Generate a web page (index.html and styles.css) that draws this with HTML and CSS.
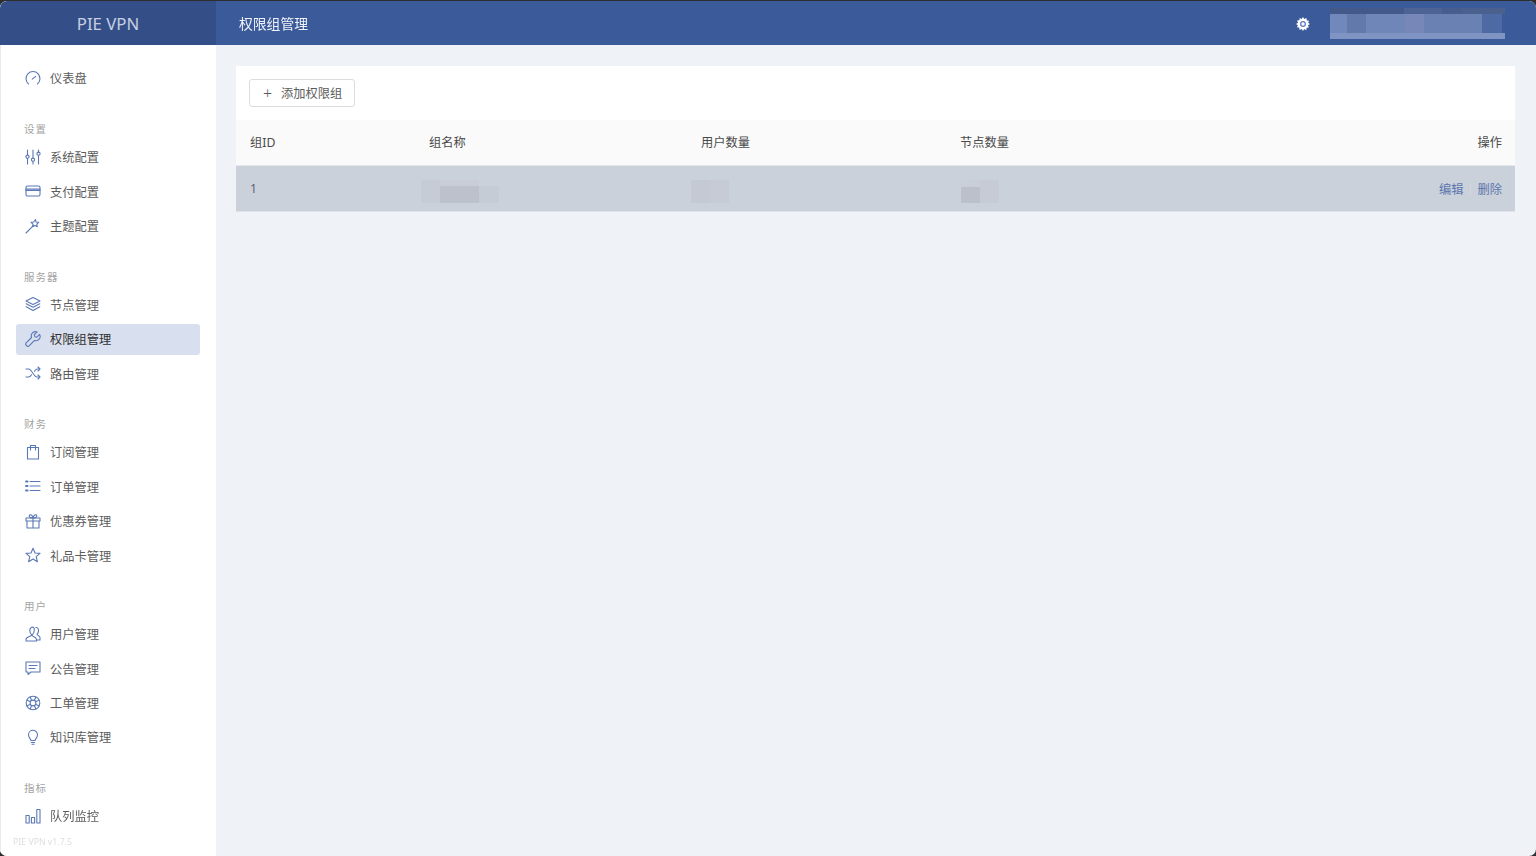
FILE: index.html
```html
<!DOCTYPE html>
<html lang="zh-CN">
<head>
<meta charset="utf-8">
<title>权限组管理 - PIE VPN</title>
<link rel="stylesheet" href="styles.css">
</head>
<body>
<div class="app">
  <aside class="sidebar">
    <div class="brand">PIE VPN</div>
    <nav class="nav">
      <a class="item"><svg class="ico" viewBox="0 0 16 16"><path d="M3.600 14a7 7 0 1 1 8.800 0"/><path d="M7.200 9.200 10.600 6.400"/></svg>仪表盘</a>
      <div class="title">设置</div>
      <a class="item"><svg class="ico" viewBox="0 0 16 16"><path d="M2.500 1v5M2.500 9.500V15M8 1v8M8 12.500V15M13.500 1v2M13.500 6.500V15"/><circle cx="2.500" cy="7.700" r="1.600"/><circle cx="8" cy="10.700" r="1.600"/><circle cx="13.500" cy="4.700" r="1.600"/></svg>系统配置</a>
      <a class="item"><svg class="ico" viewBox="0 0 16 16"><rect x="1" y="3" width="14" height="10" rx="1.400"/><path d="M1 6h14M1 7.400h14"/></svg>支付配置</a>
      <a class="item"><svg class="ico" viewBox="0 0 16 16"><path d="M1 15 8.600 7.400"/><path d="M10.500 1.500 11 4l2.700.4-1.900 1.800.5 2.600-2.400-1.200-2.300 1.200.4-2.600L6 4.400 8.700 4z"/></svg>主题配置</a>
      <div class="title">服务器</div>
      <a class="item"><svg class="ico" viewBox="0 0 16 16"><path d="M8 1.500 15 5 8 8.500 1 5z"/><path d="M1.200 7.800 8 11.200l6.800-3.400M1.200 10.800 8 14.400l6.800-3.600"/></svg>节点管理</a>
      <a class="item active"><svg class="ico" viewBox="0 0 16 16"><path d="M14.600 3.400 11.800 6.200 9.800 5.700 9.300 3.700 12.100 1A4.200 4.200 0 0 0 6.600 6.500L1.400 11.600a2.100 2.100 0 0 0 3 3L9.500 9.400A4.200 4.200 0 0 0 14.600 3.400Z"/></svg>权限组管理</a>
      <a class="item"><svg class="ico" viewBox="0 0 16 16"><path d="M1 4h2.500c3.500 0 5 8 8.500 8h2.500M1 12h2.500c1.300 0 2.200-1 3-2.300M9.500 6.300c.8-1.300 1.400-2.300 2.500-2.300h2.500"/><path d="M13 2l2 2-2 2M13 10l2 2-2 2"/></svg>路由管理</a>
      <div class="title">财务</div>
      <a class="item"><svg class="ico" viewBox="0 0 16 16"><path d="M2.500 3.500h11V15h-11z"/><path d="M5.500 6V1.500h5V6"/></svg>订阅管理</a>
      <a class="item"><svg class="ico" viewBox="0 0 16 16"><path d="M5 3.500h10M5 8h10M5 12.500h10"/><path class="thick" d="M1 3.500h1.600M1 8h1.600M1 12.500h1.600"/></svg>订单管理</a>
      <a class="item"><svg class="ico" viewBox="0 0 16 16"><path d="M1 5h14v3H1zM2 8v7h12V8M8 5v10"/><path d="M8 5C5 5 3.800 3.800 4.300 2.500 5 1 7.500 2 8 5c.5-3 3-4 3.700-2.500C12.200 3.800 11 5 8 5z"/></svg>优惠券管理</a>
      <a class="item"><svg class="ico" viewBox="0 0 16 16"><path d="M8 1.300 10 6l5 .4-3.800 3.300 1.200 5L8 12l-4.400 2.700 1.200-5L1 6.400 6 6z"/></svg>礼品卡管理</a>
      <div class="title">用户</div>
      <a class="item"><svg class="ico" viewBox="0 0 16 16"><path d="M8 1a3.200 3.200 0 0 0-3.200 3.500c0 1.800.6 3.300 1.700 4 .4.900-.4 1.400-1.600 1.800C3.200 11 1 11.600 1 13.500V15h10.500v-1.500c0-1.900-1.700-2.500-3.300-3.200-.8-.4-1.300-1-.9-1.800 1.100-.7 1.900-2.200 1.900-4A3.200 3.200 0 0 0 8 1z"/><path d="M10.800 1.300c1.900.2 3 1.600 2.700 3.800-.2 1.300-.8 2.500-1.400 3.200.3 1 1.200 1.400 2 1.800.6.400.9 1 .9 1.700V14h-3.200"/></svg>用户管理</a>
      <a class="item"><svg class="ico" viewBox="0 0 16 16"><path d="M1 2h14v10H6l-3 2.500V12H1z"/><path d="M4 5.500h8M4 8.500h6"/></svg>公告管理</a>
      <a class="item"><svg class="ico" viewBox="0 0 16 16"><circle cx="8" cy="8" r="6.800"/><circle cx="8" cy="8" r="2.900"/><path d="M5.200 2l1.300 3.200M10.800 2 9.500 5.200M5.200 14l1.300-3.200M10.800 14 9.500 10.800M2 5.200l3.200 1.300M2 10.800l3.200-1.300M14 5.200l-3.200 1.300M14 10.800l-3.200-1.300"/></svg>工单管理</a>
      <a class="item"><svg class="ico" viewBox="0 0 16 16"><path d="M6 11.500C5.500 9.800 3.500 8.500 3.500 5.800a4.500 4.500 0 0 1 9 0c0 2.700-2 4-2.500 5.700z"/><path d="M6.300 13.500h3.400M7 15.300h2"/></svg>知识库管理</a>
      <div class="title">指标</div>
      <a class="item"><svg class="ico" viewBox="0 0 16 16"><path d="M1 7.500h3.200V15H1zM6.400 9.500h3.200V15H6.400zM11.800 1.500H15V15h-3.200z"/></svg>队列监控</a>
    </nav>
    <div class="version">PIE VPN v1.7.5</div>
  </aside>
  <div class="main">
    <header class="topbar">
      <h1 class="page-title">权限组管理</h1>
      <svg class="gear" viewBox="0 0 16 16"><path d="M8 0l1.500 2.400 2.500-1.200.3 2.700 2.700.3-1.200 2.500L16 8l-2.400 1.500 1.200 2.500-2.700.3-.3 2.700-2.500-1.200L8 16l-1.500-2.400L4 14.800l-.3-2.700-2.700-.3 1.200-2.500L0 8l2.400-1.500L1.200 4l2.700-.3L4.200 1l2.300 1.300z"/><circle class="gear-ring" cx="8" cy="8" r="3.400"/><circle cx="8" cy="8" r="2"/></svg>
      <div class="account"></div>
    </header>
    <main class="content">
      <section class="card">
        <div class="toolbar">
          <button class="add-btn"><span class="plus">+</span>添加权限组</button>
        </div>
        <table class="grid">
          <colgroup><col class="c1"><col class="c2"><col class="c3"><col class="c4"><col></colgroup>
          <thead>
            <tr><th>组ID</th><th>组名称</th><th>用户数量</th><th>节点数量</th><th class="right">操作</th></tr>
          </thead>
          <tbody>
            <tr>
              <td class="id-cell">1</td>
              <td><div class="blur blur-name"></div></td>
              <td><div class="blur blur-users"></div></td>
              <td><div class="blur blur-nodes"></div></td>
              <td class="right"><a class="link">编辑</a><i class="sep"></i><a class="link">删除</a></td>
            </tr>
          </tbody>
        </table>
      </section>
    </main>
  </div>
</div>
</body>
</html>
```

FILE: styles.css
```css
* { box-sizing: border-box; }
html, body { margin: 0; height: 100%; }
body {
  background: #2e2e2e;
  font-family: "Noto Sans", "Noto Sans CJK SC", sans-serif;
  font-size: 12.25px;
  color: #5c5c5c;
  overflow: hidden;
}
.app {
  display: flex;
  height: 855px;
  margin-top: 1px;
  border-radius: 7px;
  overflow: hidden;
  background: #eff2f7;
  filter: blur(0.35px);
}
.sidebar {
  width: 216px;
  flex: none;
  display: flex;
  flex-direction: column;
  background: #fff;
  border-left: 1px solid #e9e9e9;
}
.brand {
  height: 44px;
  flex: none;
  margin-left: -1px;
  padding-top: 3px;
  display: flex;
  align-items: center;
  justify-content: center;
  background: #344f88;
  color: #c6cfe2;
  font-size: 16.800px;
  line-height: 1;
}
.nav {
  flex: 1;
  padding: 18px 16px 0 15px;
}
.item {
  display: flex;
  align-items: center;
  height: 31px;
  margin: 0 0 3.400px;
  padding: 2px 0 0 9px;
  border-radius: 3px;
  color: #5c5c5c;
  line-height: 1;
}
.item.active {
  background: #d8dfee;
  color: #2f2f2f;
}
.ico {
  width: 16px;
  height: 16px;
  flex: none;
  margin: -3px 9px 0 0;
  fill: none;
  stroke: #5a78b5;
  stroke-width: 1.100;
  stroke-linejoin: round;
  stroke-linecap: round;
}
.ico .thick { stroke-width: 1.800; }
.title {
  height: 24px;
  margin-top: 23.800px;
  padding: 0 0 2px 8px;
  display: flex;
  align-items: center;
  font-size: 10.500px;
  letter-spacing: 1px;
  color: #a4a4a4;
}
.version {
  flex: none;
  padding: 0 0 8px 12px;
  font-size: 8.750px;
  line-height: 12px;
  color: #dedede;
}
.main {
  flex: 1;
  min-width: 0;
  display: flex;
  flex-direction: column;
}
.topbar {
  height: 44px;
  flex: none;
  display: flex;
  align-items: center;
  padding: 0 31px 0 23px;
  background: #3b5a9a;
}
.page-title {
  margin: 0 auto 0 0;
  font-size: 13.800px;
  font-weight: 400;
  color: #f1f3f8;
}
.gear {
  width: 14px;
  height: 14px;
  margin: 1px 20px 0 0;
  fill: #fff;
  stroke: none;
}
.gear .gear-ring { fill: #5f78bd; }
.account {
  width: 175px;
  height: 31px;
  margin-top: 1px;
  background:
    linear-gradient(90deg, #43598a 0 74px, #4d6393 74px 112px, #465d8e 112px 132px, #4a608f 132px) top / 100% 6px no-repeat,
    linear-gradient(#7f94c2, #7f94c2) bottom / 100% 6px no-repeat,
    linear-gradient(90deg,
      #7088bb 0 17px, #6279ac 17px 36px, #6e86b8 36px 75px, #7687b8 75px 94px,
      #6a81b4 94px 152px, #4e6aa4 152px 172px, #3b5a9a 172px);
}
.content {
  flex: 1;
  padding: 21px 21px 0 20px;
}
.card {
  background: #fff;
}
.toolbar {
  padding: 13px 12px 13px 12.600px;
  height: 54px;
}
.add-btn {
  display: flex;
  align-items: center;
  width: 106.400px;
  height: 28px;
  padding: 0 0 0 13.400px;
  background: #fff;
  border: 1px solid #dcdcdc;
  border-radius: 3px;
  font: inherit;
  color: #5c5c5c;
}
.plus {
  width: 18px;
  font-size: 16px;
  font-weight: 300;
  line-height: 1;
  text-align: left;
}
.grid {
  width: 100%;
  border-collapse: collapse;
  table-layout: fixed;
}
.c1 { width: 179px; }
.c2 { width: 272px; }
.c3 { width: 259px; }
.c4 { width: 260px; }
.grid th {
  height: 45px;
  padding: 0 13px 1px 14px;
  background: #fafafa;
  border-bottom: 1px solid #e4e6ea;
  font-weight: 400;
  text-align: left;
  color: #4a4a4a;
}
.grid th.right, .grid td.right { text-align: right; }
.grid td {
  height: 46px;
  padding: 1px 13px 0 14px;
  background: #cbd1da;
  border-bottom: 1px solid #dfe3ea;
}
.id-cell { color: #5c6470; }
.link { color: #5c76ad; }
.sep {
  display: inline-block;
  width: 1px;
  height: 11px;
  margin: 0 6.500px;
  vertical-align: -1px;
  background: #d2d8e0;
}
.blur { height: 23px; margin-top: 6px; }
.blur-name {
  width: 78px;
  margin-left: -8px;
  background:
    linear-gradient(#bcc1cb, #bcc1cb) 19px 6px / 39px 17px no-repeat,
    linear-gradient(90deg, #c6cbd5 0 19px, #c8cdd7 19px 58px, #c6ccd6 58px);
  clip-path: polygon(0 0, 58px 0, 58px 6px, 100% 6px, 100% 100%, 0 100%);
}
.blur-users {
  width: 38px;
  margin-left: -10px;
  background: linear-gradient(90deg, #c4c9d3 0 19px, #c6cbd5 19px);
}
.blur-nodes {
  width: 38px;
  margin-left: 1px;
  background:
    linear-gradient(#bcc0ca, #bcc0ca) 0 7px / 19px 16px no-repeat,
    linear-gradient(90deg, #c9ced8 0 19px, #c6cbd5 19px);
}
```
